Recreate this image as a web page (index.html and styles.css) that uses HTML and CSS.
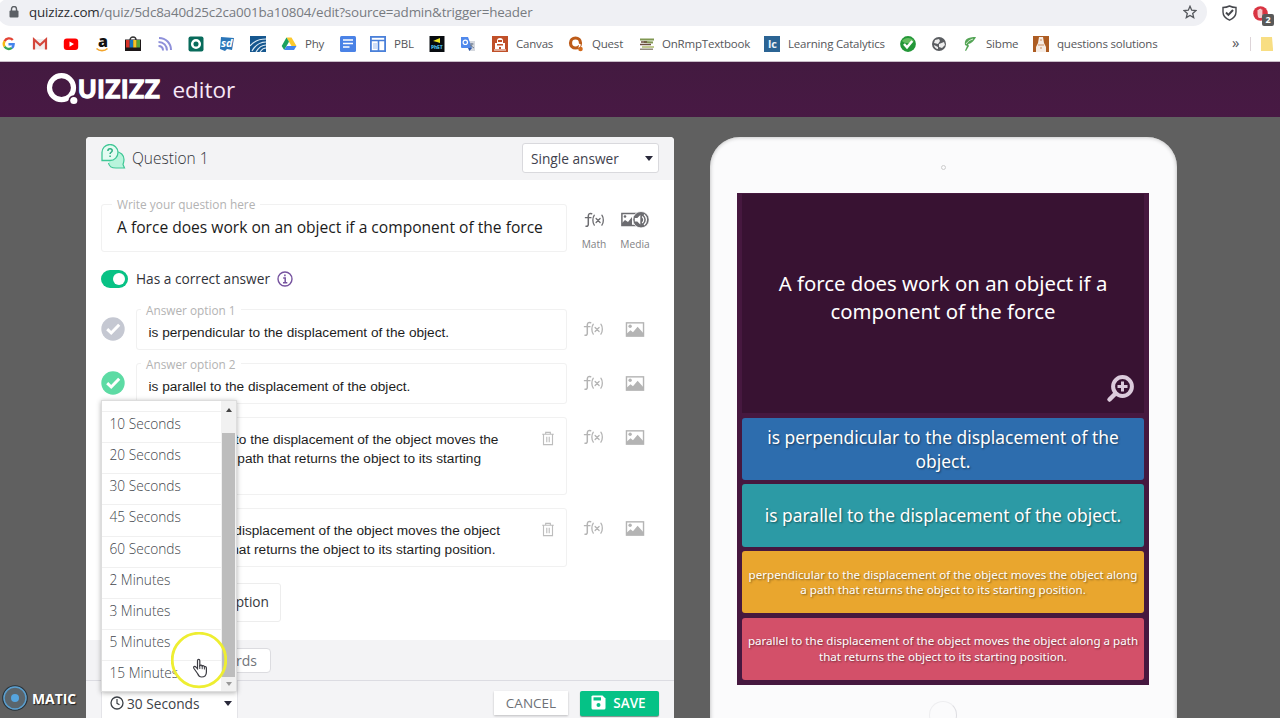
FILE: index.html
```html
<!DOCTYPE html>
<html lang="en">
<head>
<meta charset="utf-8">
<title>Quizizz editor</title>
<link rel="stylesheet" href="styles.css">
</head>
<body>
<svg class="defs" width="0" height="0">
  <symbol id="fx" viewBox="0 0 20 16"><g fill="none" stroke="currentColor" stroke-width="1.5" stroke-linecap="round"><path d="M7.2 1.7C5 .8 3.900 2 3.800 4v8.2c0 1.500-.8 2.300-2.300 2"/><path d="M.9 5.700h5.600" stroke-width="1.300"/><path d="M9.800 3.200c-1.900 2.700-1.900 7.200 0 9.900M17.400 3.200c1.900 2.700 1.900 7.200 0 9.900M11.600 6.500l4 4M15.600 6.500l-4 4" stroke-width="1.300"/></g></symbol>
  <symbol id="pic" viewBox="0 0 20 16"><rect x=".9" y=".9" width="18.200" height="14.200" fill="none" stroke="currentColor" stroke-width="1.500"/><circle cx="4.800" cy="4.500" r="1.800" fill="currentColor"/><path d="M1 15v-2.500l4.200-3.700 2.600 2.200 5-6L19 12v3z" fill="currentColor"/></symbol>
  <symbol id="check" viewBox="0 0 24 24"><circle cx="12" cy="12" r="11.700" fill="currentColor"/><path d="M6.200 12.200l4 3.800 8-8.300" fill="none" stroke="#fff" stroke-width="3"/></symbol>
  <symbol id="trash" viewBox="0 0 14 16"><g fill="none" stroke="currentColor" stroke-width="1.200"><path d="M.8 3.500h12.400M4.500 3.500v-2h5v2M2.200 3.500v11h9.600v-11M5.700 6v6M8.300 6v6"/></g></symbol>
</svg>
<div class="address">
  <div class="pill">
    <svg class="lock" width="10" height="12" viewBox="0 0 10 12"><rect x=".5" y="4.500" width="9" height="7" rx="1" fill="#5c6065"/><path d="M2.500 5V3a2.500 2.500 0 015 0v2" fill="none" stroke="#5c6065" stroke-width="1.400"/></svg>
    <span class="url"><b>quizizz.com</b>/quiz/5dc8a40d25c2ca001ba10804/edit?source=admin&amp;trigger=header</span>
    <svg class="star" width="14" height="14" viewBox="0 0 14 14"><path d="M7 1.300l1.700 3.900 4.200.4-3.200 2.800 1 4.200L7 10.400l-3.700 2.200 1-4.200L1.100 5.600l4.200-.4z" fill="none" stroke="#55585d" stroke-width="1.300"/></svg>
  </div>
  <svg width="15" height="16" viewBox="0 0 15 16"><path d="M1 2.500C4 2.500 5.500 2 7.500 1 9.500 2 11 2.500 14 2.500V7c0 4-2.500 6.500-6.500 8.200C3.500 13.500 1 11 1 7z" fill="none" stroke="#45474c" stroke-width="1.400"/><path d="M4 7.500l2.400 2.400L11 5" fill="none" stroke="#45474c" stroke-width="2"/></svg>
  <div class="blocker">
    <svg width="15" height="15" viewBox="0 0 15 15"><circle cx="7.500" cy="7.500" r="7.300" fill="#d93442"/><path d="M4.500 7V4h1.200v3V3h1.300v4V2.800h1.200V7V3.500h1.200V9l1.200-1.200c.8.2-.5 3.400-2.200 4.200H6c-1.200-.7-1.500-3-1.500-5z" fill="#f6c8cb"/></svg>
    <span>2</span>
  </div>
</div>
<div class="bookmarks">
  <div><svg viewBox="0 0 16 16"><g fill="none" stroke-width="2.400"><path d="M12.800 4A5 5 0 004.600 5.200" stroke="#e34435"/><path d="M4.600 5.200a5 5 0 000 5.400" stroke="#f6b915"/><path d="M4.600 10.600a5 5 0 007.300 1.300" stroke="#36a554"/><path d="M11.900 12c1.200-1 1.700-2.200 1.700-3.800H8.500" stroke="#4383ed"/></g></svg></div>
  <div><svg viewBox="0 0 16 16"><path d="M2 3h12v10.500H2z" fill="#f2eeee"/><path d="M2 13.500V3.500l6 5.500 6-5.500v10" fill="none" stroke="#d4463b" stroke-width="2.200"/></svg></div>
  <div><svg viewBox="0 0 16 16"><rect x=".8" y="2.500" width="14.400" height="11.500" rx="3" fill="#f00"/><path d="M6.500 5.500v5.200L11 8.100z" fill="#fff"/></svg></div>
  <div class="amz"><span>a</span><svg viewBox="0 0 16 16"><path d="M2.500 12.500c3 2.800 8 2.800 11 0" fill="none" stroke="#f3a52c" stroke-width="1.700"/></svg></div>
  <div><svg viewBox="0 0 16 16"><path d="M5 4c0-4 6-4 6 0" fill="none" stroke="#333" stroke-width="1.300"/><path d="M0 3.500h16V15H0z" fill="#1d1718"/><path d="M1 4h3.700v7.500H1z" fill="#d83428"/><path d="M4.700 4h3.500v7.500H4.700z" fill="#1775bd"/><path d="M8.200 4h3.500v7.500H8.200z" fill="#f5c427"/><path d="M11.700 4H15v7.500h-3.300z" fill="#54a53a"/></svg></div>
  <div><svg viewBox="0 0 16 16"><g fill="none" stroke="#8e90da" stroke-width="2"><path d="M2 2c7 0 12 5.500 12 12M1.500 6c5 0 8.500 3.500 8.500 8.500M1.500 10c3 0 4.500 2 4.500 4.500"/></g></svg></div>
  <div><svg viewBox="0 0 16 16"><rect x=".5" y=".5" width="15" height="15" rx="2" fill="#086b5b"/><circle cx="8" cy="8" r="3.800" fill="none" stroke="#fff" stroke-width="2.500"/></svg></div>
  <div class="sd"><svg viewBox="0 0 16 16"><path d="M2 1l13 1-2 12-5-1-2 2-5-2z" fill="#2a75b8"/></svg><span>sd</span></div>
  <div><svg viewBox="0 0 16 16"><path d="M0 0h16v16H0z" fill="#16578f"/><path d="M0 10C4 5 10 3 16 3M2 15C6 8 10 6 16 6M6 16c3-5 6-7 10-7M10 16c2-3 4-4 6-4" fill="none" stroke="#dceaf4" stroke-width="1.200"/></svg></div>
  <div><svg viewBox="0 0 16 16"><path d="M5.500 1.500h5l5 8.500h-5z" fill="#fbc92e"/><path d="M5.500 1.500L8 5.800 3.200 14 .7 10z" fill="#1aa15f"/><path d="M5.700 10h9.800L13 14H3.200z" fill="#4285f0"/></svg><span>Phy</span></div>
  <div><svg viewBox="0 0 16 16"><rect width="16" height="16" rx="1.500" fill="#4a82e6"/><path d="M3 4h10M3 7.500h10M3 11h6.500" stroke="#fff" stroke-width="1.700"/></svg></div>
  <div><svg viewBox="0 0 16 16"><rect x=".9" y=".9" width="14.200" height="14.200" fill="#fff" stroke="#4a80d9" stroke-width="1.800"/><path d="M1 4.500h14M8.500 5v10" stroke="#4a80d9" stroke-width="1.600"/><path d="M3 7h4v6H3z" fill="#cfdef7"/></svg><span>PBL</span></div>
  <div class="phet"><svg viewBox="0 0 16 16"><path d="M.5 0h15v16H.5z" fill="#080c10"/><path d="M4 5l7-3v5l-3-1z" fill="#ece727"/></svg><span>PhET</span></div>
  <div><svg viewBox="0 0 16 16"><path d="M6 5h9v10H9z" fill="#d5d8de"/><path d="M1 1h7l4 11H2a1 1 0 01-1-1z" fill="#5089ec"/><path d="M8 12h4l-2.500 3z" fill="#2d57aa"/><circle cx="5.300" cy="6.300" r="2.200" fill="none" stroke="#fff" stroke-width="1.200"/><path d="M9.500 8h4M12 7c0 3-1 4-2 5M10 9l4 3" stroke="#748195" fill="none"/></svg></div>
  <div><svg viewBox="0 0 16 16"><path d="M0 0h16v16H0z" fill="#c05029"/><path d="M5 5a3 3 0 016 0v2h2v6H3V7h2z" fill="#fff"/><path d="M6 4h4v2H6zM5 8h6v1.500H5zM7 11h2v2H7z" fill="#c05029"/><path d="M2 14h12" stroke="#fff"/></svg><span>Canvas</span></div>
  <div><svg viewBox="0 0 16 16"><circle cx="7.500" cy="7" r="5" fill="none" stroke="#bd5b19" stroke-width="3.200"/><path d="M8 7l4 2-1 3" stroke="#fff" stroke-width="1.500" fill="none"/><circle cx="12.500" cy="13" r="2.300" fill="#d36a1c"/></svg><span>Quest</span></div>
  <div class="tight"><svg viewBox="0 0 16 16"><path d="M1 3.500h14M5 6l9 .5" stroke="#809752" stroke-width="2"/><path d="M1 8.500h11M2 6h6" stroke="#6b4e3f" stroke-width="1.400"/><path d="M3 11h12" stroke="#b8c27c" stroke-width="1.700"/><path d="M1 13.200h13" stroke="#756c5f" stroke-width="1.200"/></svg><span>OnRmpTextbook</span></div>
  <div class="lc"><svg viewBox="0 0 16 16"><path d="M0 0h16v16H0z" fill="#2b6494"/></svg><i>lc</i><span>Learning Catalytics</span></div>
  <div><svg viewBox="0 0 16 16"><circle cx="8" cy="8" r="7.900" fill="#239738"/><path d="M2 5a7 6 0 0112 0c-3 3-9 3-12 0z" fill="#65bd60"/><path d="M4 8l3 3.300L12.300 5" fill="none" stroke="#fff" stroke-width="2.500"/></svg></div>
  <div><svg viewBox="0 0 16 16"><circle cx="8" cy="8" r="7" fill="#5a5d61"/><path d="M4 4l4-1 1 2-2 3-4-1zM8 8l5-2 1 3-3 3-3-1zM3 9l4 2v2c-2 0-4-2-4-4z" fill="#eee"/></svg></div>
  <div><svg viewBox="0 0 16 16"><path d="M3 9C2 3 6 1 14 1 12 5 9 8 6 8l1 2-3 5-1-.5 2-4.500z" fill="#55a557"/><path d="M4 8c2-3 4-4 7-5" stroke="#d6edd2" fill="none"/></svg><span>Sibme</span></div>
  <div><svg viewBox="0 0 16 16"><path d="M0 0h16v16H0z" fill="#ad5c22"/><path d="M6 1h4l1 6 2 4v5H3v-5l2-4z" fill="#f6ece4"/><path d="M7 4h2M5 9h6M7 12h2" stroke="#c98c62"/></svg><span>questions solutions</span></div>
  <div class="more">»</div>
  <div class="sep"></div>
  <div><svg viewBox="0 0 16 16"><path d="M2 1h11l1 12v2H2z" fill="#f8de83"/></svg></div>
</div>
<header class="top">
  <svg width="32" height="32" viewBox="0 0 32 32"><circle cx="15.500" cy="14.700" r="12" fill="none" stroke="#fff" stroke-width="5.200"/><circle cx="27.800" cy="27.500" r="5.300" fill="#461a42"/><circle cx="27.800" cy="27.500" r="3.600" fill="#fff"/></svg>
  <span class="brand">UIZIZZ</span>
  <span class="editor">editor</span>
</header>
<main>
  <section class="card">
    <div class="cardhead">
      <svg width="25" height="25" viewBox="0 0 25 25"><path d="M14 7.500c6 0 9 4 9 8 0 2.500-.8 4-1 5l1.500 3.500H15c-4 0-7-2-7.500-5" fill="#b8f4dc" stroke="#3fc796" stroke-width="1.200"/><path d="M1 16.500V9a8 8 0 118 7.500z" fill="#e4fbf2" stroke="#3fc796" stroke-width="1.300"/><path d="M6.900 7c0-3 4.300-2.700 4.300-.3 0 1.600-2.100 1.500-2.100 3.300M9.100 11.500v1.600" fill="none" stroke="#2fae82" stroke-width="1.500"/></svg>
      <h1>Question 1</h1>
      <div class="select"><span>Single answer</span><i class="caret"></i></div>
    </div>
    <div class="cardbody">
      <div class="qrow">
        <div class="field question"><label>Write your question here</label><p>A force does work on an object if a component of the force</p></div>
        <div class="tool"><svg width="21" height="16"><use href="#fx"/></svg><small>Math</small></div>
        <div class="tool media"><svg width="28" height="18" viewBox="0 0 28 18"><path d="M.9 2.500h17v12H.9z" fill="none" stroke="currentColor" stroke-width="1.500"/><circle cx="4" cy="5.500" r="1.300" fill="currentColor"/><path d="M1 14v-2l3-3 3 2 4-5v8z" fill="currentColor"/><circle cx="20" cy="8.700" r="8.200" fill="currentColor" stroke="#fff" stroke-width=".8"/><path d="M13.800 7h2.500l3-3v9.500l-3-3h-2.500z" fill="#fff"/><path d="M21.200 5.500c2 2 2 4.500 0 6.500M23 3.500c3.300 3 3.300 7.500 0 10.500" stroke="#fff" fill="none" stroke-width="1.200"/></svg><small>Media</small></div>
      </div>
      <div class="correct"><div class="toggle"><i></i></div><span>Has a correct answer</span><svg width="16" height="16" viewBox="0 0 16 16"><circle cx="8" cy="8" r="7" fill="none" stroke="#76539f" stroke-width="1.400"/><path d="M7.900 3.500v1.800M6.200 7h2v4.500M6 11.700h4.300" fill="none" stroke="#76539f" stroke-width="1.500"/></svg></div>
      <div class="answer a1"><svg class="tick" width="24" height="24"><use href="#check"/></svg><div class="field"><label>Answer option 1</label><p>is perpendicular to the displacement of the object.</p></div><svg class="fx" width="21" height="16"><use href="#fx"/></svg><svg class="pic" width="20" height="15"><use href="#pic"/></svg></div>
      <div class="answer a2"><svg class="tick on" width="24" height="24"><use href="#check"/></svg><div class="field"><label>Answer option 2</label><p>is parallel to the displacement of the object.</p></div><svg class="fx" width="21" height="16"><use href="#fx"/></svg><svg class="pic" width="20" height="15"><use href="#pic"/></svg></div>
      <div class="answer a3"><svg class="tick" width="24" height="24"><use href="#check"/></svg><div class="field"><p>perpendicular to the displacement of the object moves the<br>object along a path that returns the object to its starting<br>position.</p><svg class="trash" width="14" height="15"><use href="#trash"/></svg></div><svg class="fx" width="21" height="16"><use href="#fx"/></svg><svg class="pic" width="20" height="15"><use href="#pic"/></svg></div>
      <div class="answer a4"><svg class="tick" width="24" height="24"><use href="#check"/></svg><div class="field"><p>parallel to the displacement of the object moves the object<br>along a path that returns the object to its starting position.</p><svg class="trash" width="14" height="15"><use href="#trash"/></svg></div><svg class="fx" width="21" height="16"><use href="#fx"/></svg><svg class="pic" width="20" height="15"><use href="#pic"/></svg></div>
      <div class="add">+ Add answer option</div>
    </div>
    <div class="standards"><div class="stdbtn">Tag standards</div></div>
    <div class="actions">
      <div class="timer"><svg width="14" height="14" viewBox="0 0 14 14"><circle cx="7" cy="7" r="6" fill="none" stroke="#3c4147" stroke-width="1.300"/><path d="M7 3v4.300l2.500 1.500" fill="none" stroke="#3c4147" stroke-width="1.200"/></svg><span>30 Seconds</span><i class="caret"></i>
        <div class="menu">
          <ul><li>10 Seconds</li><li>20 Seconds</li><li>30 Seconds</li><li>45 Seconds</li><li>60 Seconds</li><li>2 Minutes</li><li>3 Minutes</li><li>5 Minutes</li><li>15 Minutes</li></ul>
          <div class="scroll"><i class="up"></i><b></b><i class="down"></i></div>
        </div>
      </div>
      <div class="cancel">CANCEL</div>
      <div class="save"><svg width="15" height="15" viewBox="0 0 15 15"><path d="M1.500.5h10l3 3v9.500a1.500 1.500 0 01-1.500 1.500H2A1.500 1.500 0 01.5 13V1.500z" fill="#fff"/><path d="M2.500 2.300h7.500v3.200H2.500z" fill="#05c286"/><circle cx="7.500" cy="10" r="2" fill="#05c286"/></svg><span>SAVE</span></div>
    </div>
  </section>
  <section class="tablet">
    <i class="camera"></i>
    <div class="screen">
      <div class="prompt"><p>A force does work on an object if a<br>component of the force</p>
        <svg class="zoom" width="28" height="28" viewBox="0 0 28 28"><circle cx="16.500" cy="11.500" r="9.400" fill="none" stroke="#dccbdc" stroke-width="4"/><path d="M16.500 6.500v10M11.500 11.500h10" stroke="#dccbdc" stroke-width="3"/><path d="M9.500 18.500l-6 6" stroke="#dccbdc" stroke-width="4.500" stroke-linecap="round"/></svg></div>
      <div class="opt blue">is perpendicular to the displacement of the<br>object.</div>
      <div class="opt teal">is parallel to the displacement of the object.</div>
      <div class="opt small gold">perpendicular to the displacement of the object moves the object along<br>a path that returns the object to its starting position.</div>
      <div class="opt small rose">parallel to the displacement of the object moves the object along a path<br>that returns the object to its starting position.</div>
    </div>
    <i class="home"></i>
  </section>
</main>
<div class="watermark"><svg width="26" height="26" viewBox="0 0 26 26"><circle cx="13" cy="13" r="12.200" fill="#5b656c" stroke="#28333b" stroke-width="1.300"/><circle cx="13" cy="13" r="11" fill="none" stroke="#5a9fd0" stroke-width="1.400"/><circle cx="13" cy="13" r="4" fill="#55a5e0"/></svg><span>MATIC</span></div>
<svg class="pointer" width="56" height="58" viewBox="0 0 56 58"><circle cx="28" cy="28" r="26.800" fill="none" stroke="#eeee31" stroke-width="2.800"/><path d="M26.500 41.500l-3.500-5c-1.200-2 .8-2.900 2-1.300l1.500 1.500v-8c0-1.800 2.300-1.800 2.300 0v5c.7-1 2.200-.7 2.400.3.800-.6 2-.2 2.200.7 1-.4 2 .2 2 1.200v4c0 3-1.800 5.100-4.900 5.100-2 0-3-1.200-4-3.500z" fill="#fff" stroke="#3b3b42" stroke-width="1.200"/><path d="M28.800 33v4M31.200 34v3.200M33.400 34.500v3" stroke="#3b3b42"/></svg>
</body>
</html>
```

FILE: styles.css
```css
* { box-sizing: border-box; }
body { margin: 0; width: 1280px; height: 720px; overflow: hidden; background: #fff; font-family: "Open Sans", sans-serif; position: relative; display: flex; flex-direction: column; }
p, h1, ul { margin: 0; padding: 0; }
svg { display: block; flex: none; }
.defs { position: absolute; }
.address { height: 26px; display: flex; align-items: center; flex: none; }
.pill { width: 1210px; height: 28px; margin: -2px 15px 0 -3px; background: #eff0f4; border-radius: 14px; display: flex; align-items: center; padding: 0 10px 0 12px; flex: none; }
.url { margin-left: 10px; font-size: 13.400px; color: #777b81; white-space: nowrap; letter-spacing: -.17px; }
.url b { font-weight: 400; color: #2b2d31; }
.star { margin-left: auto; }
.blocker { position: relative; margin-left: 16px; }
.blocker span { position: absolute; left: 9px; top: 8px; width: 12px; height: 12px; border-radius: 2px; background: #595959; color: #fff; font-size: 9px; font-weight: 700; line-height: 12px; text-align: center; }
.bookmarks { height: 36px; flex: none; border-bottom: 1px solid #c9bdc9; display: grid; align-items: center; grid-template-columns: 32px 31px 31px 31px 32px 31px 31px 31px 31px 59px 30px 59px 31px 32px 76px 71px 125px 136px 31px 31px 71px 194px 23px 9px 21px; font-size: 11.500px; letter-spacing: -.2px; color: #55565a; }
.bookmarks > div { display: flex; align-items: center; gap: 8px; white-space: nowrap; position: relative; }
.bookmarks svg { width: 16px; height: 16px; }
.bookmarks .tight { gap: 7px; }
.amz span { position: absolute; left: 4px; top: -6px; font-size: 16px; line-height: 22px; font-weight: 800; color: #111; }
.sd span { position: absolute; left: 2px; top: 0; color: #fff; font: italic 700 11px/14px "Open Sans", sans-serif; }
.phet span { position: absolute; left: 2px; top: 7px; color: #46b4df; font-size: 5px; line-height: 8px; font-weight: 800; }
.lc i { position: absolute; left: 4px; top: 1px; color: #e8f0f7; font: 700 11px/13px "Open Sans", sans-serif; }
.bookmarks .more { font-size: 15px; padding: 0 0 3px 5px; }
.bookmarks .sep { width: 1px; height: 14px; background: #ddd4d8; }
.top { height: 55px; flex: none; background: linear-gradient(#431a40, #481944); display: flex; align-items: center; padding: 0 0 1px 46px; color: #fff; }
.brand { font: 700 25px/30px Lato, sans-serif; -webkit-text-stroke: 1.300px #fff; margin: -2px 0 0; letter-spacing: .6px; }
.editor { font-size: 22.500px; margin-left: 12px; color: #f8e8f7; font-weight: 400; }
main { height: 601px; flex: none; background: #606060; display: flex; align-items: flex-start; padding: 20px 0 0 86px; gap: 35.500px; overflow: hidden; }
.card { width: 588px; height: 582px; background: #fff; border-radius: 4px 4px 0 0; display: flex; flex-direction: column; flex: none; }
.cardhead { height: 43px; flex: none; background: #f3f3f5; border-radius: 4px 4px 0 0; display: flex; align-items: center; padding: 0 15px 1px; }
.cardhead > svg { margin-top: -3px; }
.cardhead h1 { font-size: 15.500px; font-weight: 300; color: #303238; margin-left: 6px; }
.select { margin-left: auto; width: 137px; height: 30px; background: #fff; border: 1px solid #d9d9dd; border-radius: 3px; display: flex; align-items: center; justify-content: space-between; padding: 0 5px 0 8px; font-size: 13.700px; color: #41414d; }
.caret { border: 4.500px solid transparent; border-top: 5px solid #29293a; border-bottom: 0; }
.cardbody { padding: 24px 15px 0; height: 460px; flex: none; }
.qrow { display: flex; align-items: flex-start; height: 48px; }
.field { position: relative; border: 1px solid #f1f1f1; border-radius: 3px; }
.field label { position: absolute; left: 4px; top: -10px; padding: 0 5px; background: #fff; color: #b3b3b3; font-size: 11.800px; line-height: 17px; white-space: nowrap; }
.question { width: 466px; height: 48px; padding: 10px 15px; font-size: 15.600px; line-height: 24px; color: #1b1b1b; white-space: nowrap; }
.question label { left: 10px; top: -9px; font-size: 11.900px; }
.tool { width: 40px; margin: 8px 0 0 7px; display: flex; flex-direction: column; align-items: center; color: #6c6c70; }
.tool svg { height: 16px; }
.tool small { font-size: 10.200px; line-height: 14px; margin-top: 9px; color: #828285; }
.media { margin-left: 1px; }
.media svg { height: 18px; margin: -1px 0; }
.correct { display: flex; align-items: center; height: 20px; margin-top: 17px; font-size: 13.700px; color: #303238; }
.correct span { margin: -1px 7px 0 8px; }
.toggle { width: 27px; height: 18px; border-radius: 9px; background: #08c285; padding: 3px 3px; display: flex; justify-content: flex-end; }
.toggle i { width: 12px; height: 12px; border-radius: 50%; background: #fff; }
.answer { display: flex; align-items: flex-start; margin-top: 13px; }
.answer .field { width: 431px; margin-left: 11px; height: 41px; padding: 13px 11.500px; font: 13.670px/19px "Liberation Sans", sans-serif; color: #1d1d1d; white-space: nowrap; }
.answer .field label { font-family: "Open Sans", sans-serif; top: -8px; }
.a1 { margin-top: 20px; }
.a3 .field { height: 78px; padding-top: 12px; }
.a4 .field { height: 59px; padding-top: 12px; }
.tick { margin-top: 8px; color: #c5c8d2; }
.tick.on { color: #5ddba4; }
.fx { margin: 12px 0 0 16px; color: #b4b4b4; }
.pic { margin: 13px 0 0 21px; color: #b4b4b4; }
.trash { position: absolute; right: 11px; top: 13px; color: #bdbdbd; }
.add { margin-top: 16px; width: 180px; height: 39px; border: 1px solid #ededed; border-radius: 3px; font-size: 13.700px; line-height: 36px; padding-right: 11px; text-align: right; color: #37393e; }
.standards { height: 41px; flex: none; background: #f3f3f5; border-bottom: 1px solid #dcdce2; padding: 8px 15px 0; }
.stdbtn { width: 170px; height: 25px; border: 1px solid #dcdce0; border-radius: 4px; background: #fff; color: #71747a; font-size: 14px; line-height: 23px; text-align: right; padding-right: 13px; }
.actions { height: 38px; background: #f4f4f6; display: flex; padding: 0 15px; }
.timer { position: relative; width: 137px; height: 38px; padding: 6px 5px 0 8px; background: #fff; border: 1px solid #e4e4e8; display: flex; align-items: center; font-size: 13.700px; color: #3c4147; }
.timer > span { margin: 0 auto 0 3px; }
.menu { position: absolute; left: -1px; bottom: 26px; width: 136px; height: 292px; background: #fff; border: 1px solid #ddd; box-shadow: 0 1px 5px rgba(0,0,0,.3); display: flex; justify-content: space-between; padding: 10px 0 0; }
.menu ul { list-style: none; width: 120px; font-weight: 300; color: #42464c; }
.menu li { height: 31.150px; line-height: 24px; padding-left: 7.500px; border-top: 1px solid #f0f0f0; }
.scroll { width: 15px; margin-top: -10px; background: #f1f1f1; display: flex; flex-direction: column; align-items: center; }
.scroll b { width: 13px; height: 244px; background: #bdbdbd; margin-top: 21px; }
.up { border: 3.500px solid transparent; border-bottom: 4px solid #444; border-top: 0; margin-top: 7px; }
.down { border: 3.500px solid transparent; border-top: 4px solid #999; border-bottom: 0; margin-top: 5px; }
.cancel { width: 74px; height: 24px; margin: 10px 12px 0 auto; background: #fff; box-shadow: 0 1px 2px rgba(0,0,0,.22); color: #6e7177; font-size: 13.500px; line-height: 24px; text-align: center; }
.save { width: 79px; height: 25px; margin-top: 10px; background: #05c286; border-radius: 2px; box-shadow: 0 1px 1px #788d87; color: #fff; font-size: 13.500px; font-weight: 600; display: flex; align-items: center; justify-content: center; gap: 7px; padding: 0 2px 2px 0; }
.tablet { width: 467px; height: 640px; flex: none; border-radius: 30px; background: #fbfbfc; box-shadow: inset 0 0 4px #b5b5b5; display: flex; flex-direction: column; align-items: center; padding-top: 28px; }
.camera { width: 5px; height: 5px; border: 1px solid #ccc; border-radius: 50%; flex: none; }
.screen { width: 412px; height: 492px; flex: none; margin-top: 23px; background: #46183f; padding: 1px 5px 5px; display: flex; flex-direction: column; gap: 4.500px; }
.prompt { position: relative; height: 219px; flex: none; background: #381232; display: flex; align-items: center; justify-content: center; text-align: center; color: #fff; font: 20.350px/28px "Noto Sans", sans-serif; padding-bottom: 13px; }
.zoom { position: absolute; right: 10px; bottom: 10px; }
.opt { flex: 1; border-radius: 3px; color: #fff; display: flex; align-items: center; justify-content: center; text-align: center; font: 17.420px/24px "Noto Sans", sans-serif; text-shadow: 1px 1px 2px rgba(0,0,0,.45); white-space: nowrap; }
.small { font-size: 11.600px; line-height: 15.500px; }
.blue { background: #2d6dae; }
.teal { background: #2c9aa5; }
.gold { background: #e9a62e; }
.rose { background: #d35069; }
.home { width: 28px; height: 28px; flex: none; margin-top: 16px; border-radius: 50%; border: 1px solid #eeeef0; border-right-color: #dedee2; }
.watermark { position: absolute; left: 2px; top: 685px; display: flex; align-items: center; gap: 4px; color: #fff; font-weight: 700; font-size: 13.900px; text-shadow: 1px 1px 1px #222; }
.pointer { position: absolute; left: 171px; top: 632px; }
```
